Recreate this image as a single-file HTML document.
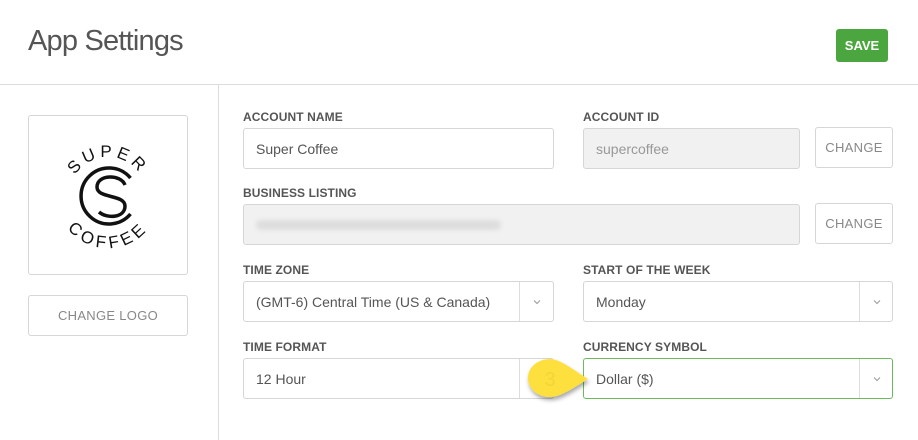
<!DOCTYPE html>
<html><head><style>
*{box-sizing:border-box;margin:0;padding:0}
body{width:918px;height:440px;overflow:hidden;background:#fff;font-family:"Liberation Sans",sans-serif;color:#555;position:relative}
.a{position:absolute}
.title{left:28px;top:25px;font-size:29px;color:#555;letter-spacing:-0.8px}
.save{left:836px;top:29px;width:52px;height:33px;background:#4ca640;border-radius:3px;color:#fff;font-weight:bold;font-size:13px;text-align:center;line-height:33px}
.hline{left:0;top:84px;width:918px;height:1px;background:#ddd}
.vline{left:218px;top:85px;width:1px;height:355px;background:#ddd}
.box{border:1px solid #d6d6d6;border-radius:3px;background:#fff}
.lbl{font-size:12px;font-weight:bold;color:#555;letter-spacing:0.1px}
.inp{font-size:14px;color:#555;padding-left:12px;display:flex;align-items:center}
.btn{font-size:13px;color:#888;text-align:center;display:flex;align-items:center;justify-content:center;letter-spacing:0.3px}
.dv{position:absolute;top:0;bottom:0;width:1px;background:#ddd}
.car{position:absolute;top:14px;width:8px;height:8px}
</style></head><body>
<div class="a title">App Settings</div>
<div class="a save">SAVE</div>
<div class="a hline"></div>
<div class="a vline"></div>

<div class="a box" style="left:28px;top:115px;width:160px;height:160px">
<svg width="158" height="158" viewBox="0 0 158 158">
<defs><path id="tp" d="M40 80 A39 39 0 0 1 118 80"/><path id="bp" d="M27 80 A52 52 0 0 0 131 80"/></defs>
<text font-family="Liberation Sans,sans-serif" font-size="17" fill="#111" letter-spacing="4"><textPath href="#tp" startOffset="50%" text-anchor="middle">SUPER</textPath></text>
<text font-family="Liberation Sans,sans-serif" font-size="17" fill="#111" letter-spacing="4"><textPath href="#bp" startOffset="50%" text-anchor="middle">COFFEE</textPath></text>
<path d="M101.5 62 A28 28 0 1 0 101.5 98" fill="none" stroke="#111" stroke-width="3.5"/>
<path d="M96 69 C92 58 68 58 68 71 C68 83 96 78 96 90 C96 102 78 103 70 96" fill="none" stroke="#111" stroke-width="3.5"/>
</svg>
</div>
<div class="a box btn" style="left:28px;top:295px;width:160px;height:41px">CHANGE LOGO</div>

<div class="a lbl" style="left:243px;top:110px">ACCOUNT NAME</div>
<div class="a box inp" style="left:243px;top:128px;width:311px;height:41px">Super Coffee</div>
<div class="a lbl" style="left:583px;top:110px">ACCOUNT ID</div>
<div class="a box inp" style="left:583px;top:128px;width:217px;height:41px;background:#f1f1f1;color:#999">supercoffee</div>
<div class="a box btn" style="left:815px;top:127px;width:78px;height:41px">CHANGE</div>

<div class="a lbl" style="left:243px;top:186px">BUSINESS LISTING</div>
<div class="a box inp" style="left:243px;top:204px;width:557px;height:41px;background:#f1f1f1">
<div style="width:245px;height:10px;background:#ddd;border-radius:5px;filter:blur(2px)"></div></div>
<div class="a box btn" style="left:815px;top:203px;width:78px;height:41px">CHANGE</div>

<div class="a lbl" style="left:243px;top:263px">TIME ZONE</div>
<div class="a box inp" style="left:243px;top:281px;width:311px;height:41px">(GMT-6) Central Time (US &amp; Canada)
<div class="dv" style="left:275px"></div>
<svg class="car" style="left:289px;top:16px" viewBox="0 0 8 8"><path d="M1 2.5 L4 5.5 L7 2.5" fill="none" stroke="#999" stroke-width="1"/></svg></div>
<div class="a lbl" style="left:583px;top:263px">START OF THE WEEK</div>
<div class="a box inp" style="left:583px;top:281px;width:310px;height:41px">Monday
<div class="dv" style="left:275px"></div>
<svg class="car" style="left:289px;top:16px" viewBox="0 0 8 8"><path d="M1 2.5 L4 5.5 L7 2.5" fill="none" stroke="#999" stroke-width="1"/></svg></div>

<div class="a lbl" style="left:243px;top:340px">TIME FORMAT</div>
<div class="a box inp" style="left:243px;top:358px;width:311px;height:41px">12 Hour
<div class="dv" style="left:275px"></div></div>
<div class="a lbl" style="left:583px;top:340px">CURRENCY SYMBOL</div>
<div class="a box inp" style="left:583px;top:358px;width:310px;height:41px;border-color:#6cba5e">Dollar ($)
<div class="dv" style="left:275px"></div>
<svg class="car" style="left:289px;top:16px" viewBox="0 0 8 8"><path d="M1 2.5 L4 5.5 L7 2.5" fill="none" stroke="#999" stroke-width="1"/></svg></div>

<svg class="a" style="left:520px;top:355px" width="75" height="52" viewBox="0 0 75 52">
<defs><filter id="sh" x="-20%" y="-20%" width="150%" height="160%"><feDropShadow dx="1" dy="3" stdDeviation="2" flood-color="#000" flood-opacity="0.35"/></filter></defs>
<path d="M30 4 C40 4 52 14 68 24 C52 34 40 42 30 42 C18 42 8 34 8 23 C8 12 18 4 30 4 Z" fill="#fddf3c" filter="url(#sh)"/>
<text x="30" y="31" font-family="Liberation Sans,sans-serif" font-size="20" fill="#f5d43a" text-anchor="middle">3</text>
</svg>
</body></html>
